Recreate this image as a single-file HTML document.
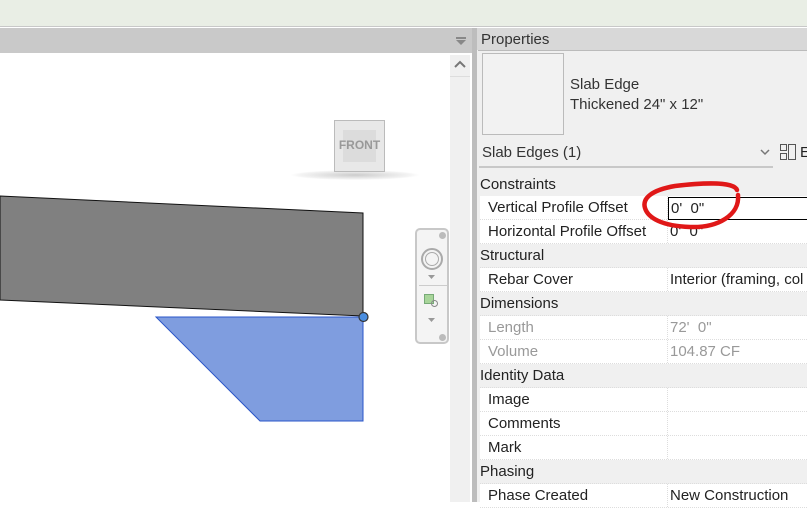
<!DOCTYPE html>
<html><head><meta charset="utf-8"><style>
*{margin:0;padding:0;box-sizing:border-box}
body{width:807px;height:502px;overflow:hidden;position:relative;background:#fff;font-family:"Liberation Sans",sans-serif;font-size:15px;color:#222}
.a{position:absolute}
.row{position:absolute;left:480px;width:327px;height:24px;line-height:24px;border-bottom:1px dotted #ddd}
.g{background:#f0f0f0}
.p{background:#fff}
.p span.l{position:absolute;left:8px}
.p span.v{position:absolute;left:190px}
.p:before{content:"";position:absolute;left:187px;top:0;bottom:0;border-left:1px dotted #ddd}
.dis{color:#999}
</style></head><body>
<div class="a" style="left:0;top:0;width:807px;height:27px;background:#e9eee5;border-bottom:1px solid #c8c8c8"></div>
<div class="a" style="left:0;top:28px;width:472px;height:25px;background:#c9c9c9"></div>
<div class="a" style="left:456px;top:37px;width:10px;height:2px;background:#888"></div>
<svg class="a" style="left:456px;top:40px" width="11" height="7"><path d="M0 0H10L5 5Z" fill="#888"/></svg>
<div class="a" style="left:472px;top:28px;width:5px;height:474px;background:#bdbdbd"></div>
<div class="a" style="left:450px;top:55px;width:20px;height:447px;background:#f0f0f0"></div>
<svg class="a" style="left:453px;top:60px" width="14" height="10"><path d="M2 7L7 2L12 7" stroke="#777" stroke-width="2" fill="none"/></svg>
<div class="a" style="left:450px;top:76px;width:20px;height:1px;background:#ddd"></div>
<div class="a" style="left:290px;top:170px;width:130px;height:10px;border-radius:50%;background:radial-gradient(#ccc,#f4f4f4 60%,transparent 70%)"></div>
<div class="a" style="left:334px;top:120px;width:51px;height:52px;background:#e8e8e8;border:1px solid #bbb"></div>
<div class="a" style="left:343px;top:130px;width:33px;height:32px;background:#dcdcdc"></div>
<div class="a" style="left:334px;top:138px;width:51px;text-align:center;font-size:12px;font-weight:bold;color:#999">FRONT</div>
<svg class="a" style="left:0;top:0" width="450" height="502">
<polygon points="0,196 363,213 363,316 0,300" fill="#808080" stroke="#111" stroke-width="1"/>
<polygon points="156,317 363,317 363,421 260,421" fill="#7f9ddf" stroke="#2a55c8" stroke-width="1"/>
<circle cx="363.5" cy="317" r="4.5" fill="#4a8ee0" stroke="#333" stroke-width="1.2"/>
</svg>
<div class="a" style="left:415px;top:228px;width:34px;height:116px;border:2px solid #c8c8c8;border-radius:5px;background:#f4f4f4"></div>
<div class="a" style="left:439px;top:232px;width:7px;height:7px;border-radius:50%;background:#bbb"></div>
<div class="a" style="left:421px;top:248px;width:22px;height:22px;border-radius:50%;border:2px solid #aaa"></div>
<div class="a" style="left:425px;top:252px;width:14px;height:14px;border-radius:50%;border:1.5px solid #aaa"></div>
<svg class="a" style="left:428px;top:275px" width="8" height="5"><path d="M0 0H7L3.5 4Z" fill="#999"/></svg>
<div class="a" style="left:419px;top:285px;width:28px;height:1px;background:#ccc"></div>
<div class="a" style="left:424px;top:294px;width:10px;height:10px;background:#a8d59a;border:1px solid #7a7"></div>
<div class="a" style="left:431px;top:300px;width:7px;height:7px;border-radius:50%;border:1.5px solid #888"></div>
<svg class="a" style="left:428px;top:318px" width="8" height="5"><path d="M0 0H7L3.5 4Z" fill="#999"/></svg>
<div class="a" style="left:439px;top:334px;width:7px;height:7px;border-radius:50%;background:#bbb"></div>
<div class="a" style="left:477px;top:28px;width:330px;height:474px;background:#f0f0f0"></div>
<div class="a" style="left:477px;top:28px;width:330px;height:22px;background:#d8d8d8"></div>
<div class="a" style="left:481px;top:31px;color:#333">Properties</div>
<div class="a" style="left:478px;top:50px;width:329px;height:1px;background:#bbb"></div>
<div class="a" style="left:482px;top:53px;width:82px;height:82px;border:1px solid #bbb;background:#f2f2f2"></div>
<div class="a" style="left:570px;top:75px;line-height:20px;color:#333">Slab Edge<br>Thickened 24" x 12"</div>
<div class="a" style="left:482px;top:144px;color:#333">Slab Edges (1)</div>
<svg class="a" style="left:760px;top:148px" width="10" height="8"><path d="M1 2L5 6L9 2" stroke="#777" stroke-width="1.5" fill="none"/></svg>
<div class="a" style="left:780px;top:144px;width:7px;height:7px;border:1px solid #555"></div>
<div class="a" style="left:780px;top:153px;width:7px;height:7px;border:1px solid #555"></div>
<div class="a" style="left:788px;top:144px;width:8px;height:16px;border:1px solid #555"></div>
<div class="a" style="left:800px;top:144px">E</div>
<div class="a" style="left:479px;top:166px;width:294px;height:2px;background:#c8c8c8"></div>
<div class="row g" style="top:173px">Constraints</div>
<div class="row p" style="top:196px"><span class="l">Vertical Profile Offset</span></div>
<div class="a" style="left:668px;top:197px;width:140px;height:23px;border:1px solid #000;background:#fff;line-height:21px;padding-left:2px">0'&nbsp;&nbsp;0"</div>
<div class="row p" style="top:220px"><span class="l">Horizontal Profile Offset</span><span class="v">0'&nbsp;&nbsp;0"</span></div>
<div class="row g" style="top:244px">Structural</div>
<div class="row p" style="top:268px"><span class="l">Rebar Cover</span><span class="v">Interior (framing, col</span></div>
<div class="row g" style="top:292px">Dimensions</div>
<div class="row p dis" style="top:316px"><span class="l">Length</span><span class="v">72'&nbsp;&nbsp;0"</span></div>
<div class="row p dis" style="top:340px"><span class="l">Volume</span><span class="v">104.87 CF</span></div>
<div class="row g" style="top:364px">Identity Data</div>
<div class="row p" style="top:388px"><span class="l">Image</span></div>
<div class="row p" style="top:412px"><span class="l">Comments</span></div>
<div class="row p" style="top:436px"><span class="l">Mark</span></div>
<div class="row g" style="top:460px">Phasing</div>
<div class="row p" style="top:484px"><span class="l">Phase Created</span><span class="v">New Construction</span></div>
<svg class="a" style="left:0;top:0" width="807" height="502">
<path d="M737 190C734 181 700 183 675 186C652 190 642 198 645 208C648 218 662 226 690 227C718 228 740 215 738 195" stroke="#e01818" stroke-width="4.5" fill="none" stroke-linecap="round"/>
</svg>
</body></html>
